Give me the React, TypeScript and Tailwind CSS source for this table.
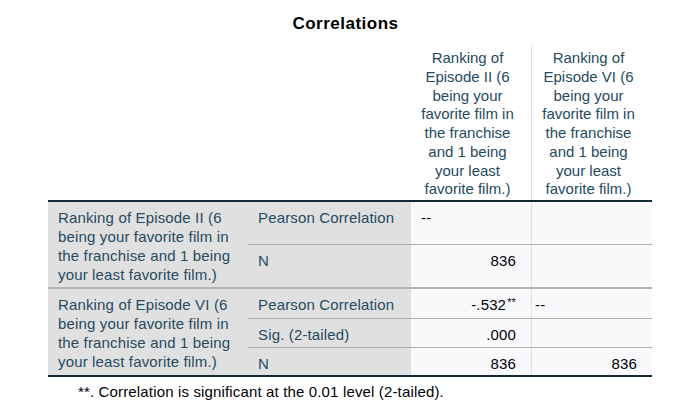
const headerLines = (ep: string) => [
  "Ranking of",
  `Episode ${ep} (6`,
  "being your",
  "favorite film in",
  "the franchise",
  "and 1 being",
  "your least",
  "favorite film.)",
]

const labelLines = (ep: string) => [
  `Ranking of Episode ${ep} (6`,
  "being your favorite film in",
  "the franchise and 1 being",
  "your least favorite film.)",
]

type Row = { stat: string; a: React.ReactNode; b: React.ReactNode; h: string }

function Group({ ep, rows }: { ep: string; rows: Row[] }) {
  return (
    <div className="flex">
      <div className="w-[200px] shrink-0 bg-[#e0e0e0] pl-[10px] pt-[6px] text-[#264a60] leading-[19px]">
        {labelLines(ep).map((l) => (
          <div key={l} className="whitespace-nowrap">{l}</div>
        ))}
      </div>
      <div className="flex flex-1 flex-col">
        {rows.map((r, i) => (
          <div
            key={r.stat}
            className={`flex ${r.h} ${i < rows.length - 1 ? "border-b border-[#aeaeae]" : ""}`}
          >
            <div className="w-[163px] shrink-0 bg-[#e0e0e0] pl-[10px] pt-[6px] text-[#264a60] leading-[19px] whitespace-nowrap">
              {r.stat}
            </div>
            <div className="w-[121px] shrink-0 border-r border-[#e0e0e0] bg-[#f9f9fb] pl-[10px] pr-[15px] pt-[6px] leading-[19px] text-[#010205]">
              {r.a}
            </div>
            <div className="flex-1 bg-[#f9f9fb] pl-[3px] pr-[15px] pt-[6px] leading-[19px] text-[#010205]">
              {r.b}
            </div>
          </div>
        ))}
      </div>
    </div>
  )
}

export default function App() {
  return (
    <div
      className="h-[407px] w-[675px] bg-white text-[15px] tracking-[0.15px]"
      style={{ fontFamily: '"Liberation Sans", Arial, sans-serif' }}
    >
      <div className="pt-[14px] pl-[48px]">
        <div className="w-[604px] pr-[9px] text-center text-[17px] font-bold leading-[20px] tracking-[0.5px] text-black">
          Correlations
        </div>
        <div className="mt-[11px] w-[604px]">
          {/* header */}
          <div className="flex h-[155px]">
            <div className="w-[363px] shrink-0" />
            <div className="w-[121px] shrink-0 border-r border-[#e0e0e0] pt-[4px] pr-[7px] text-center leading-[18.75px] tracking-normal text-[#264a60]">
              {headerLines("II").map((l) => (
                <div key={l} className="whitespace-nowrap">{l}</div>
              ))}
            </div>
            <div className="flex-1 pt-[4px] pr-[7px] text-center leading-[18.75px] tracking-normal text-[#264a60]">
              {headerLines("VI").map((l) => (
                <div key={l} className="whitespace-nowrap">{l}</div>
              ))}
            </div>
          </div>
          <div className="h-[2px] bg-[#152935]" />
          <Group
            ep="II"
            rows={[
              { stat: "Pearson Correlation", a: "--", b: "", h: "h-[43px]" },
              { stat: "N", a: <div className="text-right">836</div>, b: "", h: "h-[42px]" },
            ]}
          />
          <div className="h-[2px] bg-[#b4b4b4]" />
          <Group
            ep="VI"
            rows={[
              {
                stat: "Pearson Correlation",
                a: (
                  <div className="text-right">
                    -.532<sup className="relative -top-[4px] ml-[1px] text-[11px]">**</sup>
                  </div>
                ),
                b: "--",
                h: "h-[30px]",
              },
              { stat: "Sig. (2-tailed)", a: <div className="text-right">.000</div>, b: "", h: "h-[29px]" },
              {
                stat: "N",
                a: <div className="text-right">836</div>,
                b: <div className="text-right">836</div>,
                h: "h-[27px]",
              },
            ]}
          />
          <div className="h-[2px] bg-[#152935]" />
          <div className="pl-[30px] pt-[5px] leading-[19px] text-[#010205]">
            **. Correlation is significant at the 0.01 level (2-tailed).
          </div>
        </div>
      </div>
    </div>
  )
}
